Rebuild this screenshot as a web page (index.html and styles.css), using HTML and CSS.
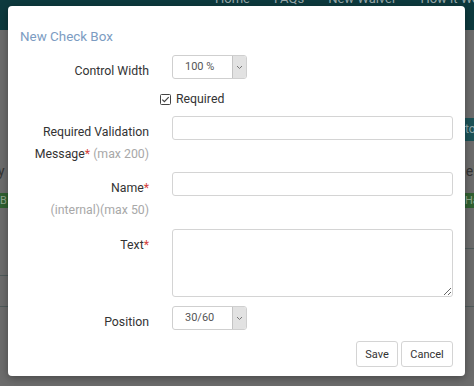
FILE: index.html
```html
<!DOCTYPE html>
<html>

<head>
  <link rel="stylesheet" href="styles.css">
</head>

<body>

<div class="page">
  <nav class="navbar">
    <a>Home</a>
    <a>FAQs</a>
    <a>New Waiver</a>
    <a>How it Works</a>
    <a>Hi</a>
  </nav>

  <div class="page-row row-button">
    <span class="teal-btn">to</span>
  </div>
  <div class="page-row row-text">
    <span>y</span>
    <span>ele</span>
  </div>
  <div class="page-row row-green">
    <span class="green-btn">B</span>
    <span class="green-btn">Ha</span>
  </div>
  <div class="page-line line-right"></div>
  <div class="page-line line-left"></div>
  <div class="page-line line-full"></div>
</div>

<div class="modal">
  <h4 class="modal-title">New Check Box</h4>

  <form class="modal-form">
    <div class="form-row">
      <label class="form-label">Control Width</label>
      <div class="form-control-wrap">
        <div class="select">
          <span class="select-value">100 %</span>
          <span class="select-arrow">
            <svg width="7" height="5" viewBox="0 0 7 5"><path d="M1 1 L3.5 3.5 L6 1" fill="none" stroke="#777" stroke-width="1"/></svg>
          </span>
        </div>
      </div>
    </div>

    <div class="form-row check-row">
      <span class="form-label"></span>
      <label class="check">
        <svg class="check-box" width="11" height="11" viewBox="0 0 11 11">
          <rect x="0.5" y="0.5" width="10" height="10" rx="1" fill="#fff" stroke="#444"/>
          <path d="M2.3 5.6 L4.4 7.7 L8.7 3.2" fill="none" stroke="#444" stroke-width="1.2"/>
        </svg>
        Required
      </label>
    </div>

    <div class="form-row">
      <label class="form-label">Required Validation<br>Message<span class="req">*</span> <span class="hint">(max 200)</span></label>
      <div class="form-control-wrap">
        <input class="form-input" type="text">
      </div>
    </div>

    <div class="form-row">
      <label class="form-label">Name<span class="req">*</span><br><span class="hint">(internal)(max 50)</span></label>
      <div class="form-control-wrap">
        <input class="form-input" type="text">
      </div>
    </div>

    <div class="form-row row-text-field">
      <label class="form-label">Text<span class="req">*</span></label>
      <div class="form-control-wrap">
        <textarea class="form-input form-textarea"></textarea>
      </div>
    </div>

    <div class="form-row row-position">
      <label class="form-label">Position</label>
      <div class="form-control-wrap">
        <div class="select">
          <span class="select-value">30/60</span>
          <span class="select-arrow">
            <svg width="7" height="5" viewBox="0 0 7 5"><path d="M1 1 L3.5 3.5 L6 1" fill="none" stroke="#777" stroke-width="1"/></svg>
          </span>
        </div>
      </div>
    </div>

    <div class="form-actions">
      <button type="button" class="btn btn-save">Save</button>
      <button type="button" class="btn btn-cancel">Cancel</button>
    </div>
  </form>
</div>

</body>

</html>
```

FILE: styles.css
```css
html, body {
  margin: 0;
  height: 100%;
}

body {
  font-family: Roboto, "Liberation Sans", sans-serif;
  background-color: #6c6c6c;
  overflow: hidden;
}

/* page behind the overlay */

.page {
  height: 100%;
  color: #3a3a3a;
}

.navbar {
  height: 30px;
  background-color: #0d3a3e;
  display: flex;
  padding-left: 215px;
  gap: 24px;
  font-size: 13px;
  line-height: 8px;
  white-space: nowrap;
  overflow: hidden;
  color: #9aa8aa;
  align-items: flex-start;
}

.navbar a {
  margin-top: -5px;
}

.page-row {
  display: flex;
  justify-content: space-between;
}

.row-button {
  margin-top: 88px;
  height: 23px;
  justify-content: flex-end;
}

.teal-btn {
  background-color: #1b5257;
  color: #8fa8aa;
  font-size: 12px;
  line-height: 23px;
  width: 9px;
  overflow: hidden;
}

.row-text {
  margin-top: 20px;
  height: 20px;
  font-size: 14px;
  line-height: 20px;
  color: #333;
}

.row-text span:first-child {
  margin-left: -2px;
}

.row-text span:last-child {
  margin-right: -10px;
}

.row-green {
  margin-top: 12px;
  height: 15px;
}

.green-btn {
  background-color: #2f6030;
  color: #8fa88f;
  font-size: 11px;
  line-height: 15px;
  width: 9px;
  overflow: hidden;
}

.page-line {
  height: 1px;
  background-color: #4e5a5a;
}

.line-right {
  margin-top: 40px;
  margin-left: 440px;
}

.line-left {
  margin-top: 26px;
  width: 20px;
}

.line-full {
  margin-top: 30px;
}

/* modal */

.modal {
  position: absolute;
  top: 6px;
  left: 8px;
  width: 457px;
  height: 370px;
  box-sizing: border-box;
  padding: 22px 12px 11px 12px;
  background-color: #fff;
  border-radius: 4px;
  box-shadow: 0 2px 8px rgba(0, 0, 0, 0.35);
}

.modal-title {
  margin: 0;
  font-size: 13.4px;
  font-weight: 400;
  line-height: 18px;
  color: #7c9cc2;
}

.modal-form {
  margin-top: 9px;
  display: flex;
  flex-direction: column;
  gap: 7px;
}

.form-row {
  display: flex;
  align-items: flex-start;
  gap: 23px;
}

.form-label {
  width: 129px;
  flex-shrink: 0;
  text-align: right;
  padding-top: 5px;
  font-size: 12.3px;
  line-height: 22px;
  color: #333;
}

.req {
  color: #d43f3a;
}

.hint {
  color: #a8a8a8;
}

.form-control-wrap {
  flex: 1;
}

.select {
  width: 75px;
  height: 24px;
  box-sizing: border-box;
  border: 1px solid #cfcfcf;
  border-radius: 3px;
  display: flex;
  overflow: hidden;
}

.select-value {
  flex: 1;
  padding-left: 12px;
  font-size: 11px;
  line-height: 22px;
  color: #555;
}

.select-arrow {
  width: 13px;
  background-color: #e2e2e2;
  border-left: 1px solid #c4c4c4;
  display: flex;
  align-items: center;
  justify-content: center;
}

.check-row {
  margin-top: -1px;
  margin-bottom: -1px;
}

.check-row .form-label {
  padding: 0;
}

.check {
  margin-left: -12px;
  display: flex;
  align-items: center;
  gap: 5px;
  font-size: 12.3px;
  line-height: 22px;
  color: #333;
}

.form-input {
  display: block;
  width: 100%;
  height: 24px;
  box-sizing: border-box;
  margin: 0;
  border: 1px solid #d4d4d4;
  border-radius: 3px;
  font-family: inherit;
}

.form-textarea {
  height: 68px;
  resize: vertical;
}

.row-text-field {
  margin-top: 1px;
}

.row-position {
  margin-top: 2px;
}

.form-actions {
  display: flex;
  justify-content: flex-end;
  gap: 3px;
  margin-top: 1px;
}

.btn {
  height: 26px;
  box-sizing: border-box;
  padding: 0;
  background-color: #fff;
  border: 1px solid #d4d4d4;
  border-radius: 3px;
  font-family: inherit;
  font-size: 11px;
  color: #333;
}

.btn-save {
  width: 42px;
}

.btn-cancel {
  width: 52px;
}
```
